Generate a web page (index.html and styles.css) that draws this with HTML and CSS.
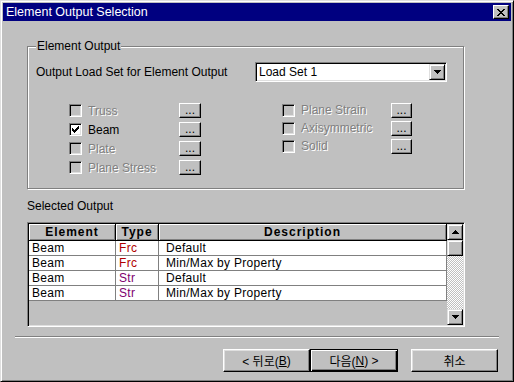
FILE: index.html
```html
<!DOCTYPE html>
<html lang="en">
<head>
    <meta charset="UTF-8">
    <title>Element Output Selection</title>
    <link rel="stylesheet" href="styles.css">
</head>
<body>
    <div class="window">
        <div class="titlebar">
            <span class="title">Element Output Selection</span>
            <div class="close">
                <svg width="8" height="7" viewBox="0 0 8 7" shape-rendering="crispEdges">
                    <path d="M0 0h2v1h-2zM6 0h2v1h-2zM1 1h2v1h-2zM5 1h2v1h-2zM2 2h4v1h-4zM3 3h2v1h-2zM2 4h4v1h-4zM1 5h2v1h-2zM5 5h2v1h-2zM0 6h2v1h-2zM6 6h2v1h-2z" fill="#000"/>
                </svg>
            </div>
        </div>

        <div class="client">
            <!-- Element output group -->
            <fieldset class="group">
                <legend>Element Output</legend>
                <div class="loadset-row">
                    <span>Output Load Set for Element Output</span>
                    <div class="select">
                        <span class="select-text">Load Set 1</span>
                        <div class="select-btn">
                            <svg width="7" height="4" viewBox="0 0 7 4" shape-rendering="crispEdges"><path d="M0 0h7v1h-7zM1 1h5v1h-5zM2 2h3v1h-3zM3 3h1v1h-1z" fill="#000"/></svg>
                        </div>
                    </div>
                </div>
                <div class="options">
                    <div class="col col-left">
                        <div class="opt disabled"><span class="box"></span><span class="lbl">Truss</span><span class="dots">...</span></div>
                        <div class="opt"><span class="box checked"><svg width="7" height="7" viewBox="0 0 7 7" shape-rendering="crispEdges"><path d="M6 0h1v3h-1zM5 1h1v3h-1zM4 2h1v3h-1zM3 3h1v3h-1zM2 4h1v3h-1zM1 3h1v3h-1zM0 2h1v3h-1z" fill="#000"/></svg></span><span class="lbl">Beam</span><span class="dots">...</span></div>
                        <div class="opt disabled"><span class="box"></span><span class="lbl">Plate</span><span class="dots">...</span></div>
                        <div class="opt disabled"><span class="box"></span><span class="lbl">Plane Stress</span><span class="dots">...</span></div>
                    </div>
                    <div class="col col-right">
                        <div class="opt disabled"><span class="box"></span><span class="lbl">Plane Strain</span><span class="dots">...</span></div>
                        <div class="opt disabled"><span class="box"></span><span class="lbl">Axisymmetric</span><span class="dots">...</span></div>
                        <div class="opt disabled"><span class="box"></span><span class="lbl">Solid</span><span class="dots">...</span></div>
                    </div>
                </div>
            </fieldset>

            <!-- Selected output list -->
            <div class="section-label">Selected Output</div>
            <div class="list">
                <div class="list-body">
                    <table>
                        <colgroup>
                            <col class="c-el">
                            <col class="c-type">
                            <col>
                        </colgroup>
                        <thead>
                            <tr><th>Element</th><th>Type</th><th>Description</th></tr>
                        </thead>
                        <tbody>
                            <tr><td>Beam</td><td class="frc">Frc</td><td class="desc">Default</td></tr>
                            <tr><td>Beam</td><td class="frc">Frc</td><td class="desc">Min/Max by Property</td></tr>
                            <tr><td>Beam</td><td class="str">Str</td><td class="desc">Default</td></tr>
                            <tr><td>Beam</td><td class="str">Str</td><td class="desc">Min/Max by Property</td></tr>
                        </tbody>
                    </table>
                </div>
                <div class="scrollbar">
                    <div class="sb-btn"><svg width="7" height="4" viewBox="0 0 7 4" shape-rendering="crispEdges"><path d="M3 0h1v1h-1zM2 1h3v1h-3zM1 2h5v1h-5zM0 3h7v1h-7z" fill="#000"/></svg></div>
                    <div class="sb-btn thumb"></div>
                    <div class="sb-track"></div>
                    <div class="sb-btn"><svg width="7" height="4" viewBox="0 0 7 4" shape-rendering="crispEdges"><path d="M0 0h7v1h-7zM1 1h5v1h-5zM2 2h3v1h-3zM3 3h1v1h-1z" fill="#000"/></svg></div>
                </div>
            </div>

            <div class="separator"></div>

            <div class="actions">
                <div class="btn">&lt; 뒤로(<u>B</u>)</div>
                <div class="btn default">다음(<u>N</u>) &gt;</div>
                <div class="btn cancel">취소</div>
            </div>
        </div>
    </div>
</body>
</html>
```

FILE: styles.css
```css
body {
    margin: 0;
    background: #c0c0c0;
    font-family: "Liberation Sans", "Noto Sans CJK KR", Arial, sans-serif;
    font-size: 12px;
    color: #000;
}

.window {
    width: 514px;
    height: 382px;
    box-sizing: border-box;
    border: 1px solid;
    border-color: #dfdfdf #000 #000 #dfdfdf;
    box-shadow: inset 1px 1px #fff, inset -1px -1px #808080;
    padding: 2px;
    background: #c0c0c0;
    display: flex;
    flex-direction: column;
}

.titlebar {
    height: 18px;
    background: #000080;
    color: #fff;
    display: flex;
    align-items: center;
    padding-left: 3px;
    flex-shrink: 0;
}

.title {
    font-size: 12.5px;
    line-height: 14px;
}

.close {
    width: 16px;
    height: 14px;
    box-sizing: border-box;
    margin-left: auto;
    margin-right: 2px;
    background: #c0c0c0;
    border: 1px solid;
    border-color: #fff #000 #000 #fff;
    box-shadow: inset -1px -1px #808080;
    display: flex;
    align-items: center;
    justify-content: center;
}

.client {
    padding: 0 12px;
    flex: 1;
}

/* group box */
.group {
    margin: 18px 0 0 12px;
    width: 437px;
    box-sizing: border-box;
    padding: 0 16px 11px 8px;
    border: 1px solid #808080;
    box-shadow: inset 1px 1px #fff, 1px 1px #fff;
    min-inline-size: 0;
}

.group legend {
    padding: 0 1px;
    line-height: 14px;
    background: #c0c0c0;
}

.loadset-row {
    margin-top: 9px;
    height: 20px;
    display: flex;
    align-items: center;
}

.select {
    margin-left: auto;
    width: 192px;
    height: 20px;
    box-sizing: border-box;
    border: 1px solid;
    border-color: #808080 #fff #fff #808080;
    box-shadow: inset 1px 1px #000, inset -1px -1px #dfdfdf;
    background: #fff;
    padding: 1px;
    display: flex;
    align-items: center;
}

.select-text {
    flex: 1;
    padding-left: 2px;
}

.select-btn {
    width: 16px;
    height: 16px;
    box-sizing: border-box;
    background: #c0c0c0;
    border: 1px solid;
    border-color: #dfdfdf #000 #000 #dfdfdf;
    box-shadow: inset 1px 1px #fff, inset -1px -1px #808080;
    display: flex;
    align-items: center;
    justify-content: center;
}

.options {
    margin-top: 19px;
    padding-left: 33px;
    display: flex;
    align-items: flex-start;
}

.col-left {
    width: 213px;
}

.opt {
    height: 19px;
    display: flex;
    align-items: center;
}

.col-right .opt {
    height: 18px;
}

.box {
    width: 13px;
    height: 13px;
    box-sizing: border-box;
    border: 1px solid;
    border-color: #808080 #fff #fff #808080;
    box-shadow: inset 1px 1px #000, inset -1px -1px #dfdfdf;
    background: #c0c0c0;
    margin-right: 6px;
    display: flex;
    align-items: center;
    justify-content: center;
}

.box.checked {
    background: #fff;
}

.lbl {
    width: 91px;
    white-space: nowrap;
}

.col-right .lbl {
    width: 90px;
}

.disabled .lbl {
    color: #808080;
    text-shadow: 1px 1px 0 #fff;
}

.dots {
    width: 22px;
    height: 15px;
    box-sizing: border-box;
    border: 1px solid;
    border-color: #fff #000 #000 #fff;
    box-shadow: inset -1px -1px #808080;
    text-align: center;
    line-height: 12px;
    font-size: 12px;
}

.col-right .dots {
    width: 21px;
}

/* selected output list */
.section-label {
    margin: 10px 0 0 12px;
    line-height: 14px;
}

.list {
    margin: 9px 0 0 12px;
    width: 438px;
    height: 105px;
    box-sizing: border-box;
    border: 1px solid;
    border-color: #808080 #fff #fff #808080;
    box-shadow: inset 1px 1px #000, inset -1px -1px #dfdfdf;
    padding: 1px;
    display: flex;
}

.list-body {
    flex: 1;
}

table {
    width: 100%;
    table-layout: fixed;
    border-collapse: separate;
    border-spacing: 0;
}

col.c-el {
    width: 87px;
}

col.c-type {
    width: 43px;
}

th {
    padding: 0;
    line-height: 16px;
    font-weight: bold;
    letter-spacing: 1px;
    text-align: center;
    background: #c0c0c0;
    border-right: 1px solid #000;
    border-bottom: 1px solid #000;
    box-shadow: inset 1px 1px #fff, inset -1px -1px #808080;
}

td {
    padding: 0 3px;
    line-height: 14px;
    background: #fff;
    border-right: 1px solid #808080;
    border-bottom: 1px solid #808080;
    letter-spacing: 0.3px;
    white-space: nowrap;
}

td.desc {
    padding-left: 7px;
}

td.frc {
    color: #b00000;
}

td.str {
    color: #800070;
}

.scrollbar {
    width: 16px;
    display: flex;
    flex-direction: column;
}

.sb-btn {
    width: 16px;
    height: 16px;
    box-sizing: border-box;
    background: #c0c0c0;
    border: 1px solid;
    border-color: #dfdfdf #000 #000 #dfdfdf;
    box-shadow: inset 1px 1px #fff, inset -1px -1px #808080;
    display: flex;
    align-items: center;
    justify-content: center;
    flex-shrink: 0;
}

.sb-track {
    flex: 1;
    background: repeating-conic-gradient(#fff 0 25%, #c0c0c0 0 50%) 0 0 / 2px 2px;
}

.separator {
    margin-top: 9px;
    border-top: 1px solid #808080;
    border-bottom: 1px solid #fff;
}

.actions {
    margin-top: 11px;
    display: flex;
    justify-content: flex-end;
    padding-right: 1px;
}

.btn {
    width: 87px;
    height: 23px;
    box-sizing: border-box;
    border: 1px solid;
    border-color: #fff #000 #000 #fff;
    box-shadow: inset -1px -1px #808080, inset 1px 1px #dfdfdf;
    display: flex;
    align-items: center;
    justify-content: center;
    font-size: 12px;
}

.btn.default {
    width: 88px;
    border-color: #000;
    box-shadow: inset 1px 1px #fff, inset -1px -1px #000, inset -2px -2px #808080;
}

.btn.cancel {
    margin-left: 13px;
}
```
